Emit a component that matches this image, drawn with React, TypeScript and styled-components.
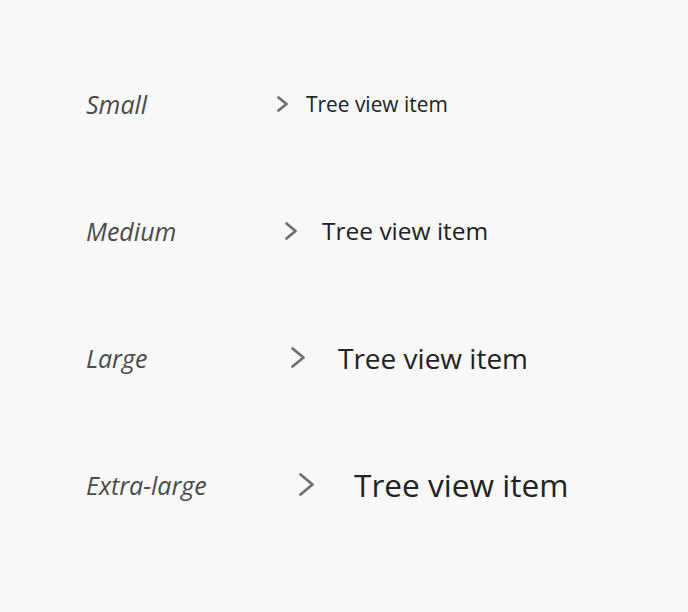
import { createGlobalStyle, styled } from 'styled-components';

const GlobalStyle = createGlobalStyle`
  html, body {
    margin: 0;
    padding: 0;
    background: #f8f8f8;
  }
  body {
    font-family: 'Open Sans', 'Noto Sans', sans-serif;
  }
`;

type Size = 's' | 'm' | 'l' | 'xl';

const sizes: Record<Size, { font: number; inset: number; icon: number; chevW: number; chevH: number }> = {
  s: { font: 20.9, inset: 15, icon: 29, chevW: 8, chevH: 13 },
  m: { font: 24.5, inset: 23, icon: 37, chevW: 9, chevH: 15 },
  l: { font: 28, inset: 29, icon: 47, chevW: 11, chevH: 18 },
  xl: { font: 31.6, inset: 37, icon: 55, chevW: 12, chevH: 20 },
};

const rows: { size: Size; label: string }[] = [
  { size: 's', label: 'Small' },
  { size: 'm', label: 'Medium' },
  { size: 'l', label: 'Large' },
  { size: 'xl', label: 'Extra-large' },
];

const Page = styled.main`
  padding: 40px 0 0 86px;
  display: flex;
  flex-direction: column;
`;

const Row = styled.div`
  height: 127px;
  display: flex;
  align-items: center;
`;

const Label = styled.span`
  width: 176px;
  font-size: 25px;
  font-style: italic;
  color: #4b4b4b;
`;

const Item = styled.div<{ $size: Size }>`
  display: flex;
  align-items: center;
  padding-left: ${(p) => sizes[p.$size].inset}px;
  font-size: ${(p) => sizes[p.$size].font}px;
  color: #222222;
`;

const IconBox = styled.span<{ $size: Size }>`
  width: ${(p) => sizes[p.$size].icon}px;
  display: flex;
  align-items: center;
`;

const Chevron = ({ size }: { size: Size }) => {
  const { chevW, chevH } = sizes[size];
  return (
    <svg width={chevW + 3} height={chevH + 3} viewBox={`0 0 ${chevW + 3} ${chevH + 3}`}>
      <polyline
        points={`1.5,1.5 ${chevW + 1.5},${chevH / 2 + 1.5} 1.5,${chevH + 1.5}`}
        fill="none"
        stroke="#6e6e6e"
        strokeWidth={2.7}
        strokeLinecap="round"
        strokeLinejoin="round"
      />
    </svg>
  );
};

const App = () => (
  <>
    <GlobalStyle />
    <Page>
      {rows.map((row) => (
        <Row key={row.size}>
          <Label>{row.label}</Label>
          <Item $size={row.size}>
            <IconBox $size={row.size}>
              <Chevron size={row.size} />
            </IconBox>
            Tree view item
          </Item>
        </Row>
      ))}
    </Page>
  </>
);

export default App;
